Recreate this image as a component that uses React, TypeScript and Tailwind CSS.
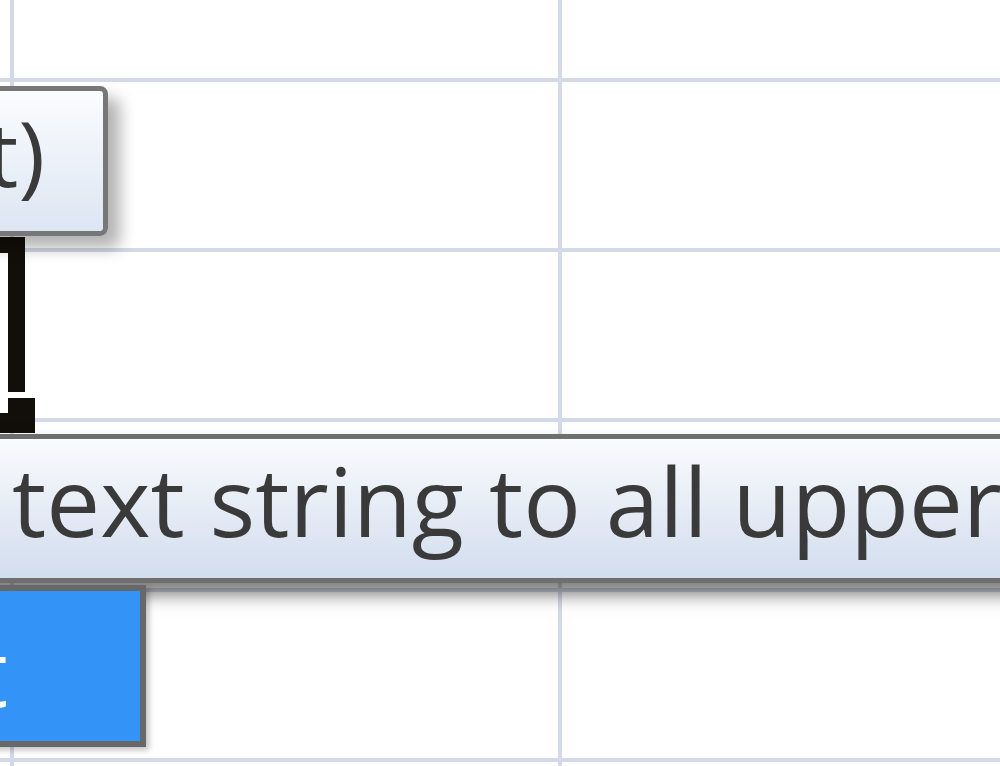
import React from 'react';

const font = { fontFamily: '"Open Sans", "Noto Sans", sans-serif' };

function Cells() {
  // 3 columns x 6 rows of white cells, the gaps show as the grid lines
  return (
    <div className="grid h-full grid-cols-[10px_544px_1fr] grid-rows-[78px_166px_166px_166px_166px_1fr] gap-[4px] bg-[#d3d9e7]">
      {[...Array(18)].map((_, i) => (
        <div key={i} className="bg-white" />
      ))}
    </div>
  );
}

export default function App() {
  return (
    <div className="relative h-[766px] w-[1000px] overflow-hidden bg-white" style={font}>
      <Cells />

      {/* selection border + fill handle */}
      <div className="absolute left-[-200px] top-[237px] h-[196px] w-[225px] border-t-[16px] border-r-[17px] border-b-[20px] border-[#120f0a]" />
      <div className="absolute left-[8px] top-[392px] h-[41px] w-[27px] border-t-[6px] border-white bg-[#120f0a]" />

      {/* argument tooltip */}
      <div className="absolute left-[-40px] top-[86px] flex h-[150px] w-[148px] items-center justify-end rounded-[8px] border-[5px] border-[#777777] bg-gradient-to-b from-[#fbfcfe] to-[#dde6f3] pb-[18px] pr-[58px] shadow-[12px_12px_16px_rgba(0,0,0,0.3)]">
        <span className="whitespace-nowrap text-[90px] leading-none text-[#3a3a3a]">UPPER(text)</span>
      </div>

      {/* highlighted list item */}
      <div className="absolute left-[-40px] top-[585px] z-10 flex h-[162px] w-[186px] items-center justify-end border-[6px] border-[#686868] bg-[#3393f7] pr-[132px] pt-[10px] shadow-[3px_3px_6px_rgba(0,0,0,0.25)]">
        <span className="whitespace-nowrap text-[94px] leading-none text-white">text</span>
      </div>

      {/* description tooltip */}
      <div className="absolute left-[-40px] right-[-40px] top-[434px] flex h-[149px] items-center border-y-[5px] border-[#6e6e6e] bg-gradient-to-b from-[#fafbfd] to-[#d2ddee] pl-[52px] shadow-[0_12px_16px_rgba(0,0,0,0.5)]">
        <span className="whitespace-nowrap pb-[18px] text-[96px] leading-none text-[#3a3a3a]">
          text string to all uppercase letters.
        </span>
      </div>
    </div>
  );
}
